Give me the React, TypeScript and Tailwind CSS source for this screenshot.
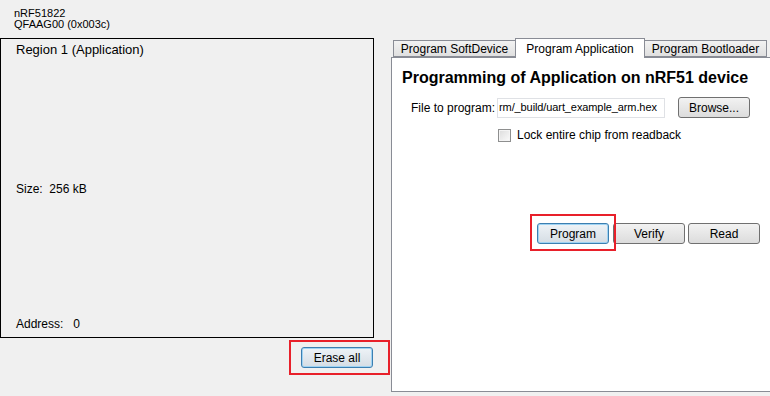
import React from "react";

const btn =
  "flex h-[21px] w-[72px] items-center justify-center rounded-[3px] border border-[#707070] bg-gradient-to-b from-[#f2f2f2] to-[#dcdcdc] text-[12px] text-black";
const btnFocus =
  "flex h-[21px] w-[72px] items-center justify-center rounded-[3px] border border-[#3c7fb1] bg-gradient-to-b from-[#eef3f7] to-[#d5dde4] text-[12px] text-black shadow-[inset_0_0_0_1px_#9fd3f3]";

function Tab({ label, active }: { label: string; active?: boolean }) {
  return active ? (
    <div className="relative z-10 -mb-px flex h-[20px] w-[130px] items-start justify-center border border-b-0 border-[#898c95] bg-white pt-[1px] text-[12px]">
      {label}
    </div>
  ) : (
    <div className="flex h-[17px] w-[122px] items-center justify-center border border-[#898c95] bg-gradient-to-b from-[#f2f2f2] to-[#e0e0e0] text-[12px] first:border-r-0 last:border-l-0">
      {label}
    </div>
  );
}

export default function App() {
  return (
    <div
      className="flex h-[396px] w-[770px] flex-col overflow-hidden bg-[#f0f0f0] text-black"
      style={{ fontFamily: '"Liberation Sans", Arial, sans-serif' }}
    >
      {/* Device info */}
      <div className="pl-[14px] pt-[8px] text-[11px] leading-[11px]">
        <div>nRF51822</div>
        <div>QFAAG00 (0x003c)</div>
      </div>

      <div className="mt-[8px] flex flex-1">
        {/* Memory layout */}
        <div className="flex w-[374px] flex-col">
          <div className="flex h-[300px] flex-col justify-between border border-black pb-[4px] pl-[15px] pt-[1px] text-[12px]">
            <div className="text-[13px]">Region 1 (Application)</div>
            <div className="pt-[4px]">Size:&nbsp; 256 kB</div>
            <div>Address:&nbsp;&nbsp; 0</div>
          </div>
          <div className="ml-[289px] mt-[2px] flex h-[35px] w-[101px] shrink-0 items-start border-2 border-[#e8202a] pl-[10px] pt-[5px]">
            <button className={btnFocus}>Erase all</button>
          </div>
        </div>

        {/* Programming tabs */}
        <div className="mb-[4px] ml-[17px] flex flex-1 flex-col">
          <div className="flex h-[19px] items-end pl-[2px]">
            <Tab label="Program SoftDevice" />
            <Tab label="Program Application" active />
            <Tab label="Program Bootloader" />
          </div>
          <div className="flex flex-1 flex-col border-b border-l border-t border-[#898c95] bg-white">
            <div className="pl-[10px] pt-[10px] text-[16px] font-bold leading-[20px]">
              Programming of Application on nRF51 device
            </div>
            <div className="mt-[9px] flex items-center text-[12px]">
              <span className="ml-[19px] w-[86px]">File to program:</span>
              <div className="flex h-[20px] w-[168px] items-center overflow-hidden whitespace-nowrap border border-[#dfe1e5] pl-[1px] text-[11px] tracking-[-0.1px]">
                rm/_build/uart_example_arm.hex
              </div>
              <button className={`${btn} ml-[13px]`}>Browse...</button>
            </div>
            <div className="ml-[106px] mt-[8px] flex items-center gap-[6px] text-[12px]">
              <div className="h-[13px] w-[13px] border border-[#8e8f8f] bg-gradient-to-br from-[#dcdcdc] to-[#fbfbfb] shadow-[inset_0_0_0_1px_#f4f4f4]" />
              <span>Lock entire chip from readback</span>
            </div>
            <div className="ml-[145px] mt-[79px] flex gap-[3px]">
              <div className="relative">
                <button className={btnFocus}>Program</button>
                <div className="absolute -left-[7px] -top-[9px] h-[37px] w-[86px] border-2 border-[#e8202a]" />
              </div>
              <button className={`${btn} ml-[1px] w-[71px]`}>Verify</button>
              <button className={btn}>Read</button>
            </div>
          </div>
        </div>
      </div>
    </div>
  );
}
